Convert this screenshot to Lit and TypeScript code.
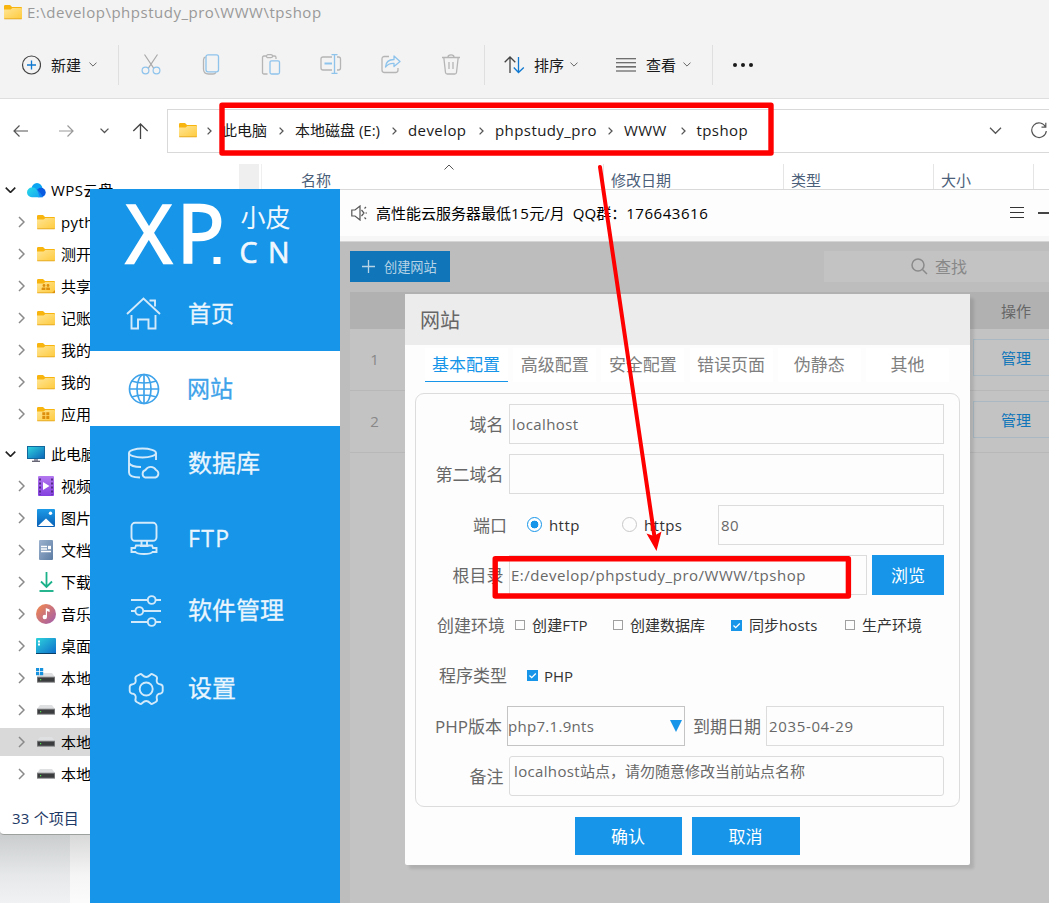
import { LitElement, html, svg, css, nothing } from "lit";
import { customElement } from "lit/decorators.js";
import { classMap } from "lit/directives/class-map.js";

const base = css`
  * { box-sizing: border-box; }
  :host {
    font-family: "Open Sans", "Noto Sans CJK SC", sans-serif;
    font-size: 15px;
    line-height: 20px;
    white-space: nowrap;
  }
  svg { display: block; flex: none; }
  .en { letter-spacing: 0.42px; }
`;

/* ---------- small icons shared by the explorer ---------- */

const folder = (mark: unknown = nothing) => html`
  <svg width="18" height="15" viewBox="0 0 18 15">
    <defs>
      <linearGradient id="f" x1="0" y1="0" x2="1" y2="1">
        <stop offset="0" stop-color="#ffe596" /><stop offset="1" stop-color="#ffcb3d" />
      </linearGradient>
    </defs>
    <path d="M0 1.2Q0 0 1.2 0H6L8 2H17Q18 2 18 3V5H0Z" fill="#f8b50f" />
    <path d="M0 4.6H6.6L8.4 3H17Q18 3 18 4V13.4Q18 14 17.2 14H.8Q0 14 0 13.4Z" fill="url(#f)" />
    <path d="M.3 13.8H17.7" stroke="#e5a823" stroke-width=".9" />
    ${mark}
  </svg>`;

const chevRight = (c = "#8a8a8a") => html`
  <svg width="7" height="12" viewBox="0 0 7 12" fill="none" stroke=${c} stroke-width="1.5"><path d="M1 1l5 5-5 5" /></svg>`;
const chevDown = (w = 8, c = "#666", s = 1) => html`
  <svg width=${w} height=${w / 2 + 1} viewBox="0 0 10 6" fill="none" stroke=${c} stroke-width=${(s * 10) / w}><path d="M.6 .6L5 5L9.4 .6" /></svg>`;

const people = svg`<g fill="#dd8f0c"><circle cx="7" cy="6.5" r="1.4"/><circle cx="11" cy="6.5" r="1.4"/><path d="M4.6 11V9.6Q4.6 8.6 5.6 8.6H8.4V11ZM9.2 11V8.6H12Q13 8.6 13 9.6V11ZM15 14L18 11V14Z"/></g>`;
const tiles = svg`<path d="M5.3 5.2h3v3h-3zM9.3 5.2h3v3h-3zM5.3 9.1h3v3h-3zM9.3 9.1h3v3h-3z" fill="#dd8f0c"/>`;

const cloud = html`
  <svg width="19" height="15" viewBox="0 0 19 15">
    <defs><linearGradient id="c" x1="0" y1="0" x2="1" y2="1"><stop offset="0" stop-color="#2adbe6" /><stop offset="1" stop-color="#16a5f2" /></linearGradient></defs>
    <circle cx="10" cy="5.500" r="5.400" fill="#0ba4f2" />
    <circle cx="14" cy="9.500" r="4.700" fill="#0a5be0" />
    <path d="M8 5.500Q12 7 16 14.200H11Q9 7.500 5.500 5Z" fill="#1180f2" />
    <path d="M4.800 4.600Q9 4 11 9Q12 12 13 14.200H4.800A4.800 4.800 0 0 1 4.800 4.600Z" fill="url(#c)" />
  </svg>`;
const monitor = html`
  <svg width="18" height="16" viewBox="0 0 18 16">
    <defs><linearGradient id="m" x1="0" y1="0" x2="1" y2="1"><stop offset="0" stop-color="#30d6df" /><stop offset="1" stop-color="#0c63b8" /></linearGradient></defs>
    <rect x=".5" y=".5" width="17" height="12" fill="url(#m)" stroke="#12689c" /><path d="M7 13h4v2h-4z" fill="#99a" /><path d="M5 15.300h8" stroke="#556" stroke-width="1.200" />
  </svg>`;
const video = html`
  <svg width="16" height="20" viewBox="0 0 16 20">
    <defs><linearGradient id="v" x1="0" y1="0" x2="0" y2="1"><stop offset="0" stop-color="#b478f0" /><stop offset="1" stop-color="#8440e0" /></linearGradient></defs>
    <rect width="16" height="20" rx="1" fill="url(#v)" />
    <path d="M2 2.500V19M14 2.500V19" stroke="#43206f" stroke-width="1.600" stroke-dasharray="2 2" />
    <path d="M5 6L11.500 10L5 14Z" fill="#fff" />
  </svg>`;
const picture = html`
  <svg width="18" height="18" viewBox="0 0 18 18">
    <defs><linearGradient id="p" x1="0" y1="0" x2="0" y2="1"><stop offset="0" stop-color="#1c9be8" /><stop offset="1" stop-color="#0a5fb4" /></linearGradient></defs>
    <rect width="18" height="18" rx="1" fill="url(#p)" /><circle cx="13.500" cy="4.300" r="1.700" fill="#fff" /><path d="M1 17L9 9.500L17 17Z" fill="#fff" />
  </svg>`;
const doc = html`
  <svg width="14" height="20" viewBox="0 0 14 20">
    <defs><linearGradient id="d" x1="0" y1="0" x2="1" y2="1"><stop offset="0" stop-color="#9cb3cf" /><stop offset="1" stop-color="#5c7ba2" /></linearGradient></defs>
    <rect width="14" height="20" rx="1" fill="url(#d)" /><path d="M2 6.500h6M2 9h6M2 11.500h10" stroke="#fff" stroke-width="1.300" /><path d="M9 5.800h3v3.400h-3z" fill="#fff" />
  </svg>`;
const download = html`
  <svg width="15" height="20" viewBox="0 0 15 20" fill="none" stroke="#1bb28a" stroke-width="1.800"><path d="M7.500 0V14.500M2 9.500L7.500 15L13 9.500" /><path d="M.5 19H14.500" stroke-width="1.900" /></svg>`;
const music = html`
  <svg width="20" height="20" viewBox="0 0 20 20">
    <defs><linearGradient id="u" x1="0" y1="0" x2="1" y2="1"><stop offset="0" stop-color="#f58a4a" /><stop offset="1" stop-color="#a05cae" /></linearGradient></defs>
    <circle cx="10" cy="10" r="10" fill="url(#u)" /><circle cx="8.800" cy="13" r="2.200" fill="#fff" /><path d="M9.800 13V4L13.600 5.500V8L11 7V13Z" fill="#fff" />
  </svg>`;
const desktop = html`
  <svg width="20" height="16" viewBox="0 0 20 16">
    <defs><linearGradient id="k" x1="0" y1="0" x2="1" y2="1"><stop offset="0" stop-color="#2ed3dc" /><stop offset="1" stop-color="#0d6ccb" /></linearGradient></defs>
    <rect width="20" height="16" rx="1" fill="url(#k)" /><path d="M2 2.500h2v2h-2zM2 5.500h2v2h-2z" fill="#fff" /><path d="M0 15.500H20" stroke="#0a3f66" />
  </svg>`;
const drive = (win = false) => html`
  <svg width="20" height="16" viewBox="0 0 20 16" overflow="visible">
    <path d="M4 3H16L19 7H1Z" fill="#dfe0e2" /><rect x="1" y="6.700" width="18" height="6" fill="#7f8082" /><rect x="1.800" y="7.700" width="16.400" height="4" fill="#3b3c3d" /><path d="M4 9h1.200v1.200h-1.200z" fill="#4be04b" />
    ${win ? svg`<path d="M0 -2h3.200v3.200h-3.200zM4 -2h3.200v3.200h-3.200zM0 2h3.200v3.200h-3.200zM4 2h3.200v3.200h-3.200z" fill="#1591dd"/>` : nothing}
  </svg>`;

@customElement("file-explorer")
class FileExplorer extends LitElement {
  static styles = [
    base,
    css`
      :host { display: flex; flex-direction: column; height: 834px; background: #fff; overflow: hidden; border-radius: 0 0 0 4px; border-bottom: 1px solid #9da19e; }
      .chrome { height: 99px; background: #f3f3f3; border-bottom: 1px solid #dedede; }
      .title { display: flex; align-items: center; gap: 5px; height: 25px; padding-left: 4px; color: #999; }
      .title .en { letter-spacing: 0.51px; margin-top: -1px; }
      .bar { display: flex; align-items: center; height: 58px; margin-top: 11px; }
      .bar svg { display: block; }
      .cmd { display: flex; align-items: center; color: #1a1a1a; height: 40px; margin-top: -1px; }
      .new { width: 119px; padding-left: 21px; gap: 10px; }
      .new svg:last-child { margin-left: -2px; }
      .rule { align-self: center; width: 1px; height: 40px; background: #dfdfdf; margin-left: -1px; }
      .tools { display: flex; width: 366px; padding-left: 2px; margin-top: -1px; }
      .tool { width: 60px; display: flex; justify-content: center; }
      .sort { width: 112px; padding-left: 19px; gap: 9px; }
      .view { width: 116px; padding-left: 19px; gap: 10px; }
      .sort svg:last-child, .view svg:last-child { margin-left: -3px; }
      .dots { display: flex; gap: 4px; padding-left: 20px; }
      .dots i { width: 4px; height: 4px; border-radius: 50%; background: #1a1a1a; }
      .addr { display: flex; align-items: center; height: 64px; }
      .nav { display: flex; align-items: center; width: 167px; padding-left: 13px; }
      .nav svg:nth-child(2) { margin-left: 31px; }
      .nav svg:nth-child(3) { margin-left: 26px; }
      .nav svg:nth-child(4) { margin-left: 23px; }
      .box { flex: 1; display: flex; align-items: center; height: 44px; border: 1px solid #d9d9d9; border-right: 0; padding-left: 11px; color: #1a1a1a; }
      .box > svg { margin-top: -1px; }
      .box > svg + svg { margin-left: 10px; }
      .crumbs { display: grid; grid-template-columns: 73px 113px 87px 129px 72.500px 60px; flex: 1; padding: 0 0 2px 10px; }
      .crumb { display: flex; align-items: center; justify-content: space-between; padding-right: 11px; }
      .crumb svg { margin-top: 2px; }
      .crumb.last { justify-content: flex-start; }
      .drop { display: flex; width: 42px; }
      .main { display: flex; flex: 1; }
      .tree { width: 239px; padding-top: 13px; color: #000; }
      .row { display: flex; align-items: center; height: 28px; margin-bottom: 4px; padding-left: 18px; }
      .row .ic { width: 26px; margin-left: 8px; display: flex; justify-content: center; }
      .row .tx { margin-left: 2px; }
      .row.top { padding-left: 5px; }
      .row.top .ic { margin-left: 7px; }
      .row.top .tx { margin-left: 2px; }
      .row.gap { margin-top: 12px; }
      .row.sel { background: #d9d9d9; }
      .status { color: #1e3a66; padding: 16px 0 0 12px; }
      .status .en { letter-spacing: 0.2px; }
      .scroll { width: 20px; background: #efefef; height: 40px; margin-top: 1px; }
      .list { flex: 1; display: flex; margin: 1px 0 0 2px; }
      .cols { flex: 1; display: grid; grid-template-columns: 342px 180px 150px 100px 1fr; height: 26px; color: #4c607a; border-left: 1px solid #efefef; }
      .col { border-right: 1px solid #e5e5e5; padding: 6px 0 0 7px; position: relative; height: 26px; }
      .col.first { padding-left: 39px; }
      .col.first svg { position: absolute; left: 182px; top: 0; }
    `,
  ];

  row(icon: unknown, text: unknown, cls = "") {
    const top = cls.includes("top");
    return html`<div class="row ${cls}">${top ? chevDown(11, "#222", 1.6) : chevRight()}<span class="ic">${icon}</span><span class="tx">${text}</span></div>`;
  }

  render() {
    const en = (t: string) => html`<span class="en">${t}</span>`;
    const crumbs = [html`此电脑`, html`本地磁盘 (E:)`, en("develop"), en("phpstudy_pro"), en("WWW"), en("tpshop")];
    return html`
      <div class="chrome">
        <div class="title">${folder()}<span class="en">E:\\develop\\phpstudy_pro\\WWW\\tpshop</span></div>
        <div class="bar">
          <div class="cmd new">
            <svg width="20" height="20" viewBox="0 0 20 20" fill="none"><circle cx="10.500" cy="10" r="9" stroke="#444" stroke-width="1.200" /><path d="M10.500 5.500v9M6 10h9" stroke="#0f78d0" stroke-width="1.300" /></svg>
            <span>新建</span>${chevDown(8)}
          </div>
          <span class="rule"></span>
          <div class="tools">
            <span class="tool"><svg width="20" height="21" viewBox="0 0 20 21" fill="none" stroke-width="1.200"><path d="M3.500 .5L12.800 14.300M16.500 .5L7.200 14.300" stroke="#aaa" /><circle cx="4.500" cy="16.500" r="3.400" stroke="#8ec3ec" /><circle cx="15.500" cy="16.500" r="3.400" stroke="#8ec3ec" /></svg></span>
            <span class="tool"><svg width="18" height="21" viewBox="0 0 18 21" fill="none" stroke-width="1.300"><path d="M3.500 3Q1.500 3.500 1.500 6V15Q1.500 20 6.500 20H11Q13 20 14 18.300" stroke="#b5b5b5" /><rect x="4" y=".8" width="12.500" height="17" rx="2" stroke="#8ec3ec" /></svg></span>
            <span class="tool"><svg width="20" height="21" viewBox="0 0 20 21" fill="none" stroke-width="1.300"><path d="M6.500 20H3Q1.500 20 1.500 18.500V3.500Q1.500 2 3 2H5M11 2H13.500Q15 2 15 3.500V5" stroke="#b5b5b5" /><rect x="5.500" y=".7" width="6" height="3" rx="1.500" stroke="#b5b5b5" /><rect x="9" y="6.800" width="9.500" height="13.200" rx="1.500" stroke="#8ec3ec" /></svg></span>
            <span class="tool"><svg width="22" height="20" viewBox="0 0 22 20" fill="none" stroke-width="1.300"><path d="M12 3H3Q1 3 1 5V14Q1 16 3 16H12M17 3H18.500Q20.500 3 20.500 5V14Q20.500 16 18.500 16H17" stroke="#b5b5b5" /><path d="M14.500 .7V19M11.500 .7H17.500M11.500 19.300H17.500" stroke="#8ec3ec" /><path d="M4.500 9.500H12" stroke="#8ec3ec" stroke-width="2" /></svg></span>
            <span class="tool"><svg width="20" height="20" viewBox="0 0 20 20" fill="none" stroke-width="1.300"><path d="M8 2.500H3.500Q1 2.500 1 5V16Q1 18.500 3.500 18.500H14.500Q17 18.500 17 16V14" stroke="#b5b5b5" /><path d="M4.500 13Q5 5.500 13 5.500V2L19 7.500L13 12.500V9.300Q7.500 9 4.500 13Z" stroke="#8ec3ec" stroke-linejoin="round" /></svg></span>
            <span class="tool"><svg width="20" height="21" viewBox="0 0 20 21" fill="none" stroke="#b5b5b5" stroke-width="1.300"><path d="M1 3.500H19M7 3Q7 .8 10 .8T13 3M2.800 3.500L4.500 18.500Q4.700 20 6.200 20H13.800Q15.300 20 15.500 18.500L17.200 3.500M8 8V15M12 8V15" /></svg></span>
          </div>
          <span class="rule"></span>
          <div class="cmd sort">
            <svg width="21" height="18" viewBox="0 0 21 18" fill="none" stroke-width="1.300"><path d="M6 17V1M.7 6.300L6 1L11.300 6.300" stroke="#444" /><path d="M14.500 1V16.500M9.800 11.500L14.500 16.500L19.800 11.500" stroke="#0f78d0" /></svg>
            <span>排序</span>${chevDown(8)}
          </div>
          <div class="cmd view">
            <svg width="20" height="14" viewBox="0 0 20 14" stroke="#444" stroke-width="1.100"><path d="M0 .7H20M0 4.800H20M0 8.900H20M0 13H20" /></svg>
            <span>查看</span>${chevDown(8)}
          </div>
          <span class="rule"></span>
          <div class="dots"><i></i><i></i><i></i></div>
        </div>
      </div>
      <div class="addr">
        <div class="nav">
          <svg width="15" height="12" viewBox="0 0 15 12" fill="none" stroke="#555" stroke-width="1.200"><path d="M15 6H1M6.500 .5L1 6L6.500 11.500" /></svg>
          <svg width="15" height="12" viewBox="0 0 15 12" fill="none" stroke="#999" stroke-width="1.200"><path d="M0 6H14M8.500 .5L14 6L8.500 11.500" /></svg>
          ${chevDown(9, "#555", 1.3)}
          <svg width="16" height="16" viewBox="0 0 16 16" fill="none" stroke="#444" stroke-width="1.300"><path d="M8.500 16V1M1.300 8L8.500 1L15.700 8" /></svg>
        </div>
        <div class="box">
          ${folder()}<svg width="5" height="8" viewBox="0 0 5 8" fill="none" stroke="#555" stroke-width="1.300"><path d="M.6 .6L4 4L.6 7.400" /></svg>
          <div class="crumbs">
            ${crumbs.map((c, i) => html`<div class=${classMap({ crumb: true, last: i === 5 })}>${c}${i < 5
              ? html`<svg width="5" height="8" viewBox="0 0 5 8" fill="none" stroke="#555" stroke-width="1.300"><path d="M.6 .6L4 4L.6 7.400" /></svg>` : nothing}</div>`)}
          </div>
          <div class="drop">${chevDown(13, "#555", 1.3)}</div>
          <svg width="18" height="17" viewBox="0 0 18 17" fill="none" stroke="#555" stroke-width="1.200"><path d="M14.600 5A7.300 7.300 0 1 0 15.300 9M14.800 .8V5.200H10.500" /></svg>
        </div>
      </div>
      <div class="main">
        <div class="tree">
          ${this.row(cloud, html`<span class="en">WPS</span>云盘`, "top")}
          ${this.row(folder(), en("python"))}
          ${this.row(folder(), "测开")}
          ${this.row(folder(people), "共享")}
          ${this.row(folder(), "记账")}
          ${this.row(folder(), "我的")}
          ${this.row(folder(), "我的")}
          ${this.row(folder(tiles), "应用")}
          ${this.row(monitor, "此电脑", "top gap")}
          ${this.row(video, "视频")}
          ${this.row(picture, "图片")}
          ${this.row(doc, "文档")}
          ${this.row(download, "下载")}
          ${this.row(music, "音乐")}
          ${this.row(desktop, "桌面")}
          ${this.row(drive(true), "本地")}
          ${this.row(drive(), "本地")}
          ${this.row(drive(), "本地", "sel")}
          ${this.row(drive(), "本地")}
          <div class="status">${en("33 ")}个项目</div>
        </div>
        <div class="scroll"></div>
        <div class="list">
          <div class="cols">
            <div class="col first">名称<svg width="10" height="6" viewBox="0 0 10 6" fill="none" stroke="#555" stroke-width="1"><path d="M.5 5.500L5 1L9.500 5.500" /></svg></div>
            <div class="col">修改日期</div>
            <div class="col">类型</div>
            <div class="col">大小</div>
          </div>
        </div>
      </div>
    `;
  }
}

/* ---------- sidebar icons ---------- */
const home = svg`<path d="M0 17L16.500 1.500L33 17M4.500 18V31.500H11V22.500H21.500V31.500H28.500V18M22.500 3.500H28V9.500"/>`;
const globe = svg`<circle cx="17" cy="17" r="14.500"/><ellipse cx="17" cy="17" rx="7" ry="14.500"/><path d="M17 2V32M2 17H32M4.500 9Q17 13 29.500 9M4.500 25Q17 21 29.500 25"/>`;
const database = svg`<ellipse cx="15.500" cy="6" rx="13.500" ry="4.500"/><path d="M2 6V25.500Q2 30.500 13 30.500M29 6V13M2 16Q4 20 14 20"/><path d="M18 30.500H28.500A4 4 0 0 0 29 23A6 6 0 0 0 18.500 23A4 4 0 0 0 18 30.500Z"/>`;
const network = svg`<rect x="4.500" y=".8" width="25" height="18" rx="3.500"/><path d="M14.500 19V24M20 19V24M13 24H21.500M9 23.500H25L26 26H29.500V30H25.500Q24 32 17 32T8.500 30H4.500V26H8Z"/>`;
const sliders = svg`<path d="M4 6H20.500M29 6H34M4 17H8M16.500 17H34M4 28H20.500M29 28H34"/><circle cx="24.700" cy="6" r="3.900"/><circle cx="12.300" cy="17" r="3.900"/><circle cx="24.700" cy="28" r="3.900"/>`;
const gear = svg`<circle cx="19.200" cy="17" r="6.500"/><path transform="translate(.7 0)" d="M12.500 2.200C14 1 15 5 18.500 5S23 1 24.500 2.200L28 4Q30 5 29 8Q28.500 12 33 12.500Q35 13 35 15V19Q35 21 33 21.500Q28.500 22 29 26Q30 29 28 30L24.500 31.800C23 33 22 29 18.500 29S14 33 12.500 31.800L9 30Q7 29 8 26Q8.500 22 4 21.500Q2 21 2 19V15Q2 13 4 12.500Q8.500 12 8 8Q7 5 9 4Z" stroke-linejoin="round"/>`;

@customElement("site-dialog")
class SiteDialog extends LitElement {
  static styles = [
    base,
    css`
      :host { display: block; background: #fdfdfd; border-radius: 2px; box-shadow: 4px 4px 3px rgba(0, 0, 0, 0.1); color: #686868; }
      .head { height: 51px; background: #ececec; padding: 15px 15px; font-size: 20px; line-height: 24px; color: #666; }
      .tabs { display: flex; gap: 5.200px; padding: 3px 0 0 20px; }
      .tab { width: 83px; height: 34px; text-align: center; font-size: 17px; line-height: 34px; color: #808080; background: #fff; }
      .tab.on { color: #1695e9; border-bottom: 1px solid #1695e9; text-indent: -1px; }
      .form { margin: 11px 10px 0; height: 414px; border: 1px solid #dcdcdc; border-radius: 9px; padding: 10px 15px 0 0; display: grid; grid-template-columns: 528px; grid-auto-rows: 50.300px; align-content: start; }
      .line { display: flex; height: 40px; align-items: center; }
      .lab { font-size: 17px; width: 87.500px; text-align: right; flex: none; margin-right: 5.500px; padding-top: 2px; }
      .field { border: 1px solid #dcdcdc; height: 40px; display: flex; align-items: center; padding-left: 2px; flex: 1; }
      .port { width: 91px; margin-right: 5px; }
      .radio { width: 15px; height: 15px; border: 1px solid #c8c8c8; border-radius: 50%; margin: 0 7px 0 15px; flex: none; }
      .radio.on { border: 1.500px solid #1695e9; background: radial-gradient(circle, #1695e9 0 3.600px, #fff 4.200px); }
      .dark { color: #333; }
      .proto { width: 95px; display: flex; align-items: center; }
      .p80 { flex: none; width: 226px; margin-left: 22px; }
      .p1 .proto + .proto { width: 89px; }
      .root { margin-right: 5px; padding-left: 1px; }
      .root .en { letter-spacing: 0.52px; }
      .browse { width: 72px; }
      .btn { background: #1695e9; color: #fff; font-size: 17px; display: flex; align-items: center; justify-content: center; height: 40px; padding-top: 1px; }
      .browse.btn { padding-top: 2px; }
      .envlab { width: 89px; margin-right: 10px; padding-top: 2px; }
      .typelab { width: 91px; margin-right: 20px; padding-top: 2px; }
      .check { display: flex; align-items: center; gap: 7px; }
      .check .cb { width: 10px; height: 10px; border: 1px solid #a0a0a0; }
      .check .cb.on { width: 11px; height: 11px; border: 0; }
      .c0 { width: 98px; } .c1 { width: 118px; } .c2 { width: 114px; }
      .c0 .dark { letter-spacing: 0.150px; }
      .c2 .en { letter-spacing: 0.100px; }
      .c3 { gap: 6px; }
      .c3 .dark { padding-top: 1px; }
      .c3 .en { letter-spacing: 0; }
      .verlab { width: 86px; margin-right: 5px; }
      .select { flex: none; width: 178px; border-color: #c4c4c4; justify-content: space-between; padding: 0 2px 0 0; }
      .select .en { letter-spacing: 0.300px; }
      .date .en { letter-spacing: 0.650px; }
      .datelab { font-size: 17px; margin: 2px 5px 0 8px; }
      .note { border-radius: 3px; align-items: flex-start; padding: 4px 0 0 4px; }
      .note .en { letter-spacing: 0.350px; }
      .foot { display: flex; gap: 10px; justify-content: center; padding-top: 10px; }
      .foot .btn { width: 107px; height: 38px; padding-right: 1px; }
      .foot .btn + .btn { width: 108px; }
    `,
  ];

  check(text: unknown, on: boolean, cls: string) {
    return html`<span class="check ${cls}">${on
      ? html`<svg class="cb on" viewBox="0 0 11 11"><rect width="11" height="11" fill="#1695e9" /><path d="M2.500 5.500L4.700 7.700L8.800 3.500" fill="none" stroke="#fff" stroke-width="1.300" /></svg>`
      : html`<span class="cb"></span>`}<span class="dark">${text}</span></span>`;
  }

  render() {
    const tabs = ["基本配置", "高级配置", "安全配置", "错误页面", "伪静态", "其他"];
    const en = (t: string) => html`<span class="en">${t}</span>`;
    return html`
      <div class="head">网站</div>
      <div class="tabs">${tabs.map((t, i) => html`<div class=${classMap({ tab: true, on: i === 0 })}>${t}</div>`)}</div>
      <div class="form">
        <div class="line"><span class="lab">域名</span><div class="field">${en("localhost")}</div></div>
        <div class="line"><span class="lab">第二域名</span><div class="field"></div></div>
        <div class="line p1"><span class="lab port">端口</span>
          <span class="proto dark"><i class="radio on"></i>${en("http")}</span>
          <span class="proto dark"><i class="radio"></i>${en("https")}</span>
          <div class="field p80">${en("80")}</div></div>
        <div class="line"><span class="lab">根目录</span><div class="field root">${en("E:/develop/phpstudy_pro/WWW/tpshop")}</div><div class="btn browse">浏览</div></div>
        <div class="line"><span class="lab envlab">创建环境</span>
          ${this.check(html`创建FTP`, false, "c0")}${this.check("创建数据库", false, "c1")}
          ${this.check(html`同步${en("hosts")}`, true, "c2")}${this.check("生产环境", false, "")}</div>
        <div class="line"><span class="lab typelab">程序类型</span>${this.check(en("PHP"), true, "c3")}</div>
        <div class="line"><span class="lab verlab">PHP版本</span>
          <div class="field select">${en("php7.1.9nts")}<svg width="12" height="12" viewBox="0 0 12 12"><path d="M0 0H12L6 12Z" fill="#1695e9" /></svg></div>
          <span class="datelab">到期日期</span><div class="field date">${en("2035-04-29")}</div></div>
        <div class="line"><span class="lab">备注</span><div class="field note">${en("localhost")}<span>站点，请勿随意修改当前站点名称</span></div></div>
      </div>
      <div class="foot"><div class="btn">确认</div><div class="btn">取消</div></div>
    `;
  }
}

@customElement("server-panel")
class ServerPanel extends LitElement {
  static styles = [
    base,
    css`
      :host { display: grid; grid-template-columns: 250px 1fr; background: #fdfdfd; }
      .side { background: #1695e9; color: #eaf5fd; }
      .logo { height: 87px; overflow: visible; }
      .item { display: flex; align-items: center; height: 75px; padding-left: 37px; font-size: 24px; line-height: 30px; gap: 25px; }
      .item svg { fill: none; stroke: #d3eafb; stroke-width: 1.900; margin-top: 2px; overflow: visible; }
      .item span { -webkit-text-stroke: 0.300px currentColor; margin-top: -1px; }
      .item.on { background: #fff; color: #3fa3ea; }
      .item.on svg { stroke: #3fa3ea; stroke-width: 1.700; }
      .item.on span { margin: -2px 0 0 -1px; }
      .item.soft { padding-bottom: 6px; }
      .item.short span { font-size: 23px; }
      .ftp { letter-spacing: 1.300px; font-size: 23px; }
      .page { display: flex; flex-direction: column; min-width: 0; }
      .top { height: 53px; display: flex; align-items: center; padding: 0 0 4px 11px; color: #000; border-bottom: 1px solid #d5d5d5; background: linear-gradient(#d9d9d9 1px, #fdfdfd 1px 47px, #f6f6f6 47px); }
      .ad { margin-left: 8px; flex: 1; }
      .ad .en { letter-spacing: 0.550px; }
      .qq { margin-left: 8px; }
      .win { display: flex; gap: 14px; width: 39px; align-items: center; }
      .body { flex: 1; background: #bdbdbd; padding: 9px 0 0 10px; display: flex; flex-direction: column; }
      .acts { display: flex; justify-content: space-between; height: 41px; }
      .create { width: 100px; height: 31px; background: #1076b9; color: #b7d3e6; display: flex; align-items: center; gap: 9px; padding: 1px 0 0 12px; font-size: 13.200px; }
      .create svg { margin-top: -2px; }
      .search { width: 225px; height: 31px; background: #c3c3c3; color: #888; display: flex; align-items: center; gap: 7px; padding-left: 87px; font-size: 16px; }
      .table { flex: 1; background: #c3c3c3; }
      .tr { display: flex; justify-content: space-between; height: 62px; border-bottom: 1px solid #b8b8b8; }
      .tr.th { height: 37px; background: #b1b1b1; border: 0; color: #666; }
      .no { width: 49px; text-align: center; padding-top: 20px; color: #888; }
      .op { width: 79px; text-align: left; padding: 9px 0 0 31px; }
      .manage { width: 76px; height: 37px; margin-top: 10px; border: 1px solid #a9b8c2; border-right: 0; padding: 8px 0 0 27px; color: #1076b9; }
    `,
  ];

  render() {
    const items: [string, unknown][] = [["首页", home], ["网站", globe], ["数据库", database], ["FTP", network], ["软件管理", sliders], ["设置", gear]];
    return html`
      <div class="side">
        <svg class="logo" width="250" height="87" viewBox="0 0 250 87" fill="#fff" font-family="Open Sans, sans-serif">
          <g font-size="81" stroke="#fff" stroke-width="2.400"><text x="0" y="0" transform="translate(36.300 74) scale(.97 1)">X</text><text x="0" y="0" transform="translate(87 74) scale(.97 1)">P</text></g>
          <rect x="123.500" y="68" width="7" height="7" />
          <g fill="#f0f8fe"><text x="150.500" y="38" font-size="25" font-family="Noto Sans CJK SC, sans-serif">小皮</text>
          <g font-size="28.500" stroke="#f0f8fe" stroke-width=".7"><text x="149.500" y="73.500">C</text><text x="178" y="73.500">N</text></g></g>
        </svg>
        ${items.map(([t, ic], i) => html`<div class=${classMap({ item: true, on: i === 1, short: i < 2, soft: i === 4 })}><svg width="36" height="36" viewBox="0 0 36 36">${ic}</svg><span class=${classMap({ ftp: t === "FTP" })}>${t}</span></div>`)}
      </div>
      <div class="page">
        <div class="top">
          <svg width="17" height="16" viewBox="0 0 17 16" fill="none" stroke="#555" stroke-width="1.200"><path d="M.8 5H4L9 1V15L4 11H.8ZM10.500 5L13 8L10.500 11M13.500 3.500L15 2M14.500 8H16M13.500 12.500L15 14" /></svg>
          <span class="ad">高性能云服务器最低<span class="en">15</span>元/月<span class="qq">QQ群：<span class="en">176643616</span></span></span>
          <span class="win">
            <svg width="14" height="12" viewBox="0 0 14 12" stroke="#333"><path d="M0 .5H14M0 5.500H14M0 10.500H14" /></svg>
            <svg width="14" height="2" viewBox="0 0 14 2"><rect width="14" height="2" fill="#444" /></svg>
          </span>
        </div>
        <div class="body">
          <div class="acts">
            <div class="create"><svg width="13" height="13" viewBox="0 0 13 13" stroke="#b7d3e6" stroke-width="1.300"><path d="M6.500 0V13M0 6.500H13" /></svg>创建网站</div>
            <div class="search"><svg width="17" height="17" viewBox="0 0 17 17" fill="none" stroke="#8a8a8a" stroke-width="1.500"><circle cx="7" cy="7" r="6" /><path d="M11.500 11.500L16 16" /></svg>查找</div>
          </div>
          <div class="table">
            <div class="tr th"><span></span><span class="op">操作</span></div>
            <div class="tr"><span class="no">1</span><span class="manage">管理</span></div>
            <div class="tr"><span class="no">2</span><span class="manage">管理</span></div>
          </div>
        </div>
      </div>
    `;
  }
}

@customElement("app-root")
class AppRoot extends LitElement {
  static styles = css`
    :host { display: block; position: relative; width: 1049px; height: 903px; overflow: hidden; background: linear-gradient(90deg, #eaecee 70px, #fafafa 70px); }
    .shade { position: absolute; left: 0; top: 833px; width: 90px; height: 70px; background: linear-gradient(rgba(70, 75, 72, 0.2), rgba(160, 165, 160, 0.06) 60%, rgba(255, 255, 255, 0.3)); }
    file-explorer { position: absolute; left: 0; top: 0; width: 1049px; }
    server-panel { position: absolute; left: 90px; top: 189px; width: 959px; height: 714px; }
    site-dialog { position: absolute; left: 405px; top: 294px; width: 565px; height: 571px; }
    .marks { position: absolute; left: 0; top: 0; }
  `;
  render() {
    return html`
      <div class="shade"></div>
      <file-explorer></file-explorer>
      <server-panel></server-panel>
      <site-dialog></site-dialog>
      <svg class="marks" width="1049" height="903" viewBox="0 0 1049 903" fill="none" stroke="#f00" stroke-linejoin="round">
        <rect x="222" y="105.200" width="549" height="47.800" stroke-width="5.400" />
        <rect x="495.200" y="558.700" width="353.200" height="37.300" stroke-width="5.400" />
        <path d="M600 167L654.500 537" stroke-width="4" stroke-linecap="round" />
        <path d="M646.500 533.500L654 536L661.500 531.500L656.500 551Z" fill="#f00" stroke="none" />
      </svg>
    `;
  }
}
